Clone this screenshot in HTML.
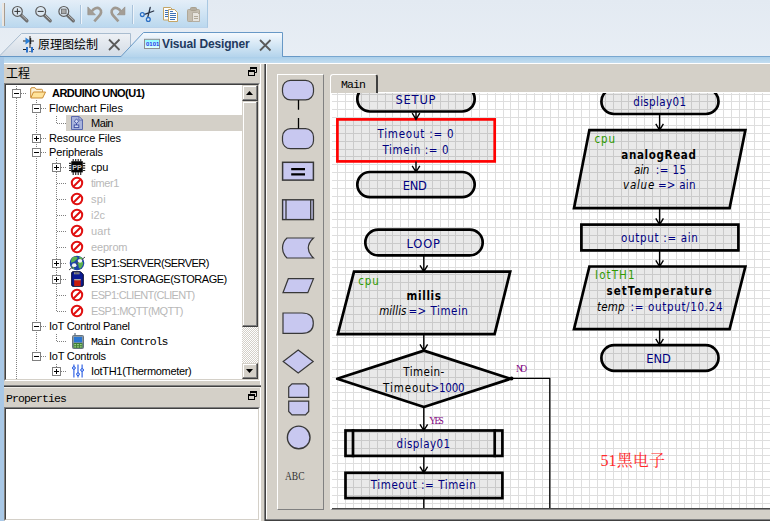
<!DOCTYPE html>
<html lang="zh"><head><meta charset="utf-8"><title>Visual Designer</title><style>
*{box-sizing:border-box;margin:0;padding:0}
html,body{width:770px;height:521px;overflow:hidden;background:#d4d0c8}
body{position:relative;font-family:"Liberation Sans","Noto Sans CJK SC",sans-serif;font-size:12px;color:#000}
.abs{position:absolute}
#topbar{left:0;top:0;width:770px;height:57px;background:linear-gradient(#e3eaf2,#e8eef5)}
#toolbar{left:0;top:0;width:208px;height:28px;background:linear-gradient(#e4eef8,#d2e5f4 45%,#bbd8ee);border-right:1px solid #a9c8e2;border-bottom:1px solid #b9d2ea}
#band{left:0;top:57px;width:770px;height:6px;background:linear-gradient(#abcfea,#c3ddf0)}
#tabline{left:0;top:56px;width:770px;height:1px;background:#78a7d0}
#leftstripe{left:0;top:57px;width:4px;height:464px;background:#a9c8e6}
.mono,.row.mono{font-family:"Liberation Mono","Noto Serif CJK SC",monospace;font-size:11.5px;letter-spacing:-.9px}
.song{font-family:"Liberation Serif","Noto Serif CJK SC",serif}
.sunken{border:1px solid;border-color:#808080 #fff #fff #808080}
.sunken>.in{position:absolute;left:0;top:0;right:0;bottom:0;border:1px solid;border-color:#404040 #d4d0c8 #d4d0c8 #404040;background:#fff}
.row{position:absolute;left:0;height:16px;line-height:16px;white-space:nowrap;font-size:11px}
.dis{color:#b8b8b8}
.btn{position:absolute;background:#d4d0c8;border:1px solid;border-color:#d4d0c8 #404040 #404040 #d4d0c8;box-shadow:inset -1px -1px 0 #808080,inset 1px 1px 0 #fff}
.pm{position:absolute;width:9px;height:9px;border:1px solid #808080;background:#fff}
.pm:before{content:"";position:absolute;left:1px;top:3px;width:5px;height:1px;background:#000}
.pm.plus:after{content:"";position:absolute;left:3px;top:1px;width:1px;height:5px;background:#000}
.vdot{position:absolute;width:1px;background-image:linear-gradient(#808080 50%,transparent 50%);background-size:1px 2px}
.hdot{position:absolute;height:1px;background-image:linear-gradient(90deg,#808080 50%,transparent 50%);background-size:2px 1px}
</style></head><body>
<div id="topbar" class="abs"></div>
<div id="toolbar" class="abs"></div>
<div id="tabline" class="abs"></div>
<div id="band" class="abs"></div>
<div id="leftstripe" class="abs"></div>
<svg class="abs" style="left:0;top:0" width="210" height="28" viewBox="0 0 210 28"><rect x="2" y="3" width="2" height="23" fill="#ece7e1"/><rect x="4" y="3" width="1" height="23" fill="#a89c90"/><g><path d="M21.099999999999998 15.2l5.8 5.6" stroke="#6e6e6e" stroke-width="3.3" stroke-linecap="round"/><path d="M21.599999999999998 15l5.3 5.1" stroke="#b8b8b8" stroke-width="1" stroke-linecap="round"/><circle cx="17.4" cy="11.4" r="4.9" fill="#dbe7f1" stroke="#5c5c5c" stroke-width="1.2"/><path d="M14.4 11.4h6M17.4 8.4v6" stroke="#333" stroke-width="1"/></g><g><path d="M44.400000000000006 15.2l5.8 5.6" stroke="#6e6e6e" stroke-width="3.3" stroke-linecap="round"/><path d="M44.900000000000006 15l5.3 5.1" stroke="#b8b8b8" stroke-width="1" stroke-linecap="round"/><circle cx="40.7" cy="11.4" r="4.9" fill="#dbe7f1" stroke="#5c5c5c" stroke-width="1.2"/><path d="M37.7 11.4h6" stroke="#333" stroke-width="1"/></g><g><path d="M67.5 15.2l5.8 5.6" stroke="#6e6e6e" stroke-width="3.3" stroke-linecap="round"/><path d="M68.0 15l5.3 5.1" stroke="#b8b8b8" stroke-width="1" stroke-linecap="round"/><circle cx="63.8" cy="11.4" r="4.9" fill="#dbe7f1" stroke="#5c5c5c" stroke-width="1.2"/><rect x="61.5" y="9.1" width="4.6" height="4.6" fill="#a8a8a8" stroke="#666" stroke-width=".8"/></g><rect x="80" y="5" width="1" height="19" fill="#a9c2da"/><rect x="81" y="5" width="1" height="19" fill="#eef4fa"/><g id="undo"><path d="M87.8 6.9V14.8H95.4Z" fill="#a39d95" stroke="#8e8880" stroke-width=".6" stroke-linejoin="round"/><path d="M91.8 11.3C93.5 8.3 97.3 6.9 99.6 8.7C102.3 10.9 101 14 99 16.2L94.3 21.3" fill="none" stroke="#9f9991" stroke-width="2.7"/></g><use href="#undo" transform="translate(212.7,0) scale(-1,1)"/><rect x="132" y="5" width="1" height="19" fill="#a9c2da"/><rect x="133" y="5" width="1" height="19" fill="#eef4fa"/><g fill="none"><path d="M150.2 7.5L147.8 17.2M153.7 11L144.5 14.3" stroke="#2b3548" stroke-width="1.3" stroke-linecap="round"/><circle cx="142.3" cy="14.6" r="1.9" stroke="#2a6fc4" stroke-width="1.3" fill="#dfeaf6"/><circle cx="148.3" cy="19.4" r="1.9" stroke="#2a6fc4" stroke-width="1.3" fill="#dfeaf6"/></g><g><path d="M163.5 7.5h7l2.5 2.5v10h-9.5z" fill="#fdfdfd" stroke="#c4a566"/><path d="M168.5 9.5h6l3 3v9h-9z" fill="#fff" stroke="#c4a566"/><path d="M165 10.5h3M165 12.5h3M165 14.5h3M165 16.5h3M170 13.5h6M170 15.5h6M170 17.5h6M170 19.5h5M170 11.5h3" stroke="#3f72b8" stroke-width="1"/></g><g><rect x="187.5" y="9.5" width="12" height="12" rx="1" fill="#c4bdb0" stroke="#b0a898"/><rect x="190.5" y="7.5" width="6" height="3" rx="1" fill="#b4ad9f" stroke="#a8a090"/><path d="M192.5 12.5h5l2 2v7h-7z" fill="#e6e3dd" stroke="#b4ada0"/><path d="M194 16.5h4M194 18.5h4" stroke="#b0a898"/></g></svg>
<svg class="abs" style="left:0;top:28px" width="300" height="30" viewBox="0 28 300 30">
<defs><linearGradient id="t1" x1="0" y1="0" x2="0" y2="1"><stop offset="0" stop-color="#eef1f5"/><stop offset="1" stop-color="#d3dce6"/></linearGradient>
<linearGradient id="cy" x1="0" y1="0" x2="0" y2="1"><stop offset="0" stop-color="#86fbff"/><stop offset="1" stop-color="#e6ffff"/></linearGradient><linearGradient id="t2" x1="0" y1="0" x2="0" y2="1"><stop offset="0" stop-color="#f6fafe"/><stop offset="1" stop-color="#b4d4ec"/></linearGradient></defs>
<path d="M-1 56.5L21.5 33.5H130.5V56.5Z" fill="url(#t1)" stroke="#a9bccf"/>
<path d="M121 57L143.5 32.5H282.5V57Z" fill="url(#t2)"/>
<path d="M0 56.5H121L143.5 32.5H282.5V56.5H300" fill="none" stroke="#6798c6"/>
<g stroke="#5a5a5a" stroke-width="1.8"><path d="M109 39.5l10.5 10.5M119.5 39.5l-10.5 10.5M260 40l10.5 10.5M270.5 40l-10.5 10.5"/></g>
<g><path d="M30 36v16M23 41h11M23 49.5h11" stroke="#222" stroke-width="1" fill="none"/><path d="M25.5 37.5v7l5-3.5z" fill="#2a80d8"/><path d="M30.5 38v6" stroke="#222" stroke-width="1.4"/><rect x="26" y="47" width="2" height="5.5" fill="#2a70c8"/><rect x="31" y="47" width="2" height="5.5" fill="#2a70c8"/><rect x="28" y="48" width="3" height="3" fill="#e4e8ee"/></g>
<rect x="144.5" y="39.3" width="15" height="9.2" fill="url(#cy)" stroke="#8f8f8f"/>
</svg>
<div class="abs" style="left:38px;top:36px;font-size:12px;line-height:18px;white-space:nowrap">原理图绘制</div>
<div class="abs" style="left:162px;top:36px;font-size:12px;line-height:16px;white-space:nowrap;font-weight:bold;letter-spacing:-.15px;color:#1f3a5f">Visual Designer</div>
<div class="abs" style="left:146px;top:41px;font-size:6px;line-height:7px;color:#2838e8;font-weight:bold;white-space:nowrap;letter-spacing:0">0101</div>
<div class="abs" style="left:4px;top:63px;width:257px;height:458px;background:#d4d0c8;border-right:1px solid #fff"></div>
<div class="abs" style="left:6px;top:65px;font-size:12px;line-height:18px">工程</div>
<svg class="abs" style="left:248px;top:67px" width="9" height="9" viewBox="0 0 9 9"><path d="M2.5 2.5V0.5H8.5V5.5H6.5" fill="none" stroke="#000"/><rect x="2" y="0" width="7" height="2" fill="#000"/><rect x="0.5" y="3.5" width="6" height="5" fill="none" stroke="#000"/><rect x="0" y="3" width="7" height="2" fill="#000"/></svg>
<div class="abs sunken" style="left:4px;top:83px;width:256px;height:298px"><div class="in"></div></div>
<div class="abs" style="left:242px;top:85px;width:16px;height:294px;background:#eae8e3;background-image:conic-gradient(#fff 25%,#d4d0c8 0 50%,#fff 0 75%,#d4d0c8 0);background-size:2px 2px"></div>
<div class="btn" style="left:242px;top:85px;width:16px;height:16px"></div>
<div class="btn" style="left:242px;top:363px;width:16px;height:16px"></div>
<div class="btn" style="left:242px;top:101px;width:16px;height:226px"></div>
<svg class="abs" style="left:242px;top:85px" width="16" height="294"><path d="M4 10h7l-3.5-4z" fill="#000"/><path d="M4 284h7l-3.5 4z" fill="#000"/></svg>
<div class="abs" style="left:0;top:0;width:242px;height:379px;overflow:hidden"><div class="vdot" style="left:16px;top:86px;height:3px"></div><div class="vdot" style="left:16px;top:98px;height:282px"></div><div class="vdot" style="left:36px;top:100px;height:253px"></div><div class="vdot" style="left:56px;top:116px;height:8px"></div><div class="vdot" style="left:56px;top:158px;height:154px"></div><div class="vdot" style="left:56px;top:334px;height:8px"></div><div class="vdot" style="left:56px;top:364px;height:4px"></div><div class="hdot" style="left:21px;top:93px;width:6px"></div><div class="pm" style="left:12px;top:89px"></div><div class="abs" style="left:30px;top:87px;width:16px;height:12px;line-height:0"><svg width="16" height="12" viewBox="0 0 16 12"><path d="M.700 10.5V2q0-1.3 1.3-1.3h3l1.3 1.6h5.2q1 0 1 1v1.5" fill="#fdf2d6" stroke="#c98a32" stroke-width="1"/><path d="M.800 11L3.5 5h12L12.6 11z" fill="#ffe39a" stroke="#c98a32" stroke-width="1" stroke-linejoin="round"/></svg></div><div class="row" style="left:52px;top:85px;font-weight:bold;letter-spacing:-0.52px;">ARDUINO UNO(U1)</div><div class="hdot" style="left:41px;top:108px;width:6px"></div><div class="pm" style="left:32px;top:104px"></div><div class="row" style="left:49px;top:100px;letter-spacing:0.00px;">Flowchart Files</div><div class="hdot" style="left:57px;top:123px;width:10px"></div><div class="abs" style="left:66px;top:115px;width:176px;height:16px;background:#d4d0c8"></div><div class="abs" style="left:71px;top:116px;width:12px;height:14px;line-height:0"><svg width="12" height="14" viewBox="0 0 12 14"><path d="M.500 .500h7.5l3.5 3.5v9.5h-11z" fill="#a9b4dc" stroke="#5a69ac"/><path d="M8 .500v3.5h3.5z" fill="#e6ebfa" stroke="#5a69ac" stroke-linejoin="round"/><path d="M5.5 3l2.2 2.2-2.2 2.2-2.2-2.2z" fill="#d4dcf4" stroke="#3a4aa0" stroke-width=".9"/><path d="M5.5 7.4v1.6" stroke="#3a4aa0"/><rect x="3.2" y="9" width="4.6" height="2.6" fill="#d4dcf4" stroke="#3a4aa0" stroke-width=".9"/></svg></div><div class="row" style="left:91px;top:115px;letter-spacing:-0.45px;">Main</div><div class="hdot" style="left:41px;top:138px;width:6px"></div><div class="pm plus" style="left:32px;top:134px"></div><div class="row" style="left:49px;top:130px;letter-spacing:-0.1px;">Resource Files</div><div class="hdot" style="left:41px;top:152px;width:6px"></div><div class="pm" style="left:32px;top:148px"></div><div class="row" style="left:49px;top:144px;letter-spacing:-0.16px;">Peripherals</div><div class="hdot" style="left:61px;top:167px;width:6px"></div><div class="pm plus" style="left:52px;top:163px"></div><div class="abs" style="left:69px;top:159px;width:17px;height:16px;line-height:0"><svg width="17" height="16" viewBox="0 0 17 16"><rect x="2.3" y="2.2" width="11.5" height="11.2" fill="#050505"/><path d="M4.2 0v2.5M6.7 0v2.5M9.2 0v2.5M11.7 0v2.5M4.2 13v2.9M6.7 13v2.9M9.2 13v2.9M11.7 13v2.9M0 4.3h2.5M0 6.7h2.5M0 9.1h2.5M0 11.5h2.5M13.5 4.3h2.7M13.5 6.7h2.7M13.5 9.1h2.7M13.5 11.5h2.7" stroke="#2a2a2a" stroke-width="1.2"/><text x="8.05" y="10.6" font-size="7.5" font-weight="bold" fill="#cfcfcf" text-anchor="middle" font-family="Liberation Sans,sans-serif" textLength="9.5" lengthAdjust="spacingAndGlyphs">PP</text></svg></div><div class="row" style="left:91px;top:159px;letter-spacing:-0.18px;">cpu</div><div class="hdot" style="left:57px;top:183px;width:10px"></div><div class="abs" style="left:70px;top:176px;width:14px;height:14px;line-height:0"><svg width="14" height="14" viewBox="0 0 14 14"><circle cx="7" cy="7" r="5.2" fill="#fff" stroke="#e01010" stroke-width="2"/><path d="M3.5 10.5l7-7" stroke="#e01010" stroke-width="2"/></svg></div><div class="row dis" style="left:91px;top:175px;letter-spacing:-0.45px;">timer1</div><div class="hdot" style="left:57px;top:199px;width:10px"></div><div class="abs" style="left:70px;top:192px;width:14px;height:14px;line-height:0"><svg width="14" height="14" viewBox="0 0 14 14"><circle cx="7" cy="7" r="5.2" fill="#fff" stroke="#e01010" stroke-width="2"/><path d="M3.5 10.5l7-7" stroke="#e01010" stroke-width="2"/></svg></div><div class="row dis" style="left:91px;top:191px;letter-spacing:0.27px;">spi</div><div class="hdot" style="left:57px;top:215px;width:10px"></div><div class="abs" style="left:70px;top:208px;width:14px;height:14px;line-height:0"><svg width="14" height="14" viewBox="0 0 14 14"><circle cx="7" cy="7" r="5.2" fill="#fff" stroke="#e01010" stroke-width="2"/><path d="M3.5 10.5l7-7" stroke="#e01010" stroke-width="2"/></svg></div><div class="row dis" style="left:91px;top:207px;letter-spacing:-0.03px;">i2c</div><div class="hdot" style="left:57px;top:231px;width:10px"></div><div class="abs" style="left:70px;top:224px;width:14px;height:14px;line-height:0"><svg width="14" height="14" viewBox="0 0 14 14"><circle cx="7" cy="7" r="5.2" fill="#fff" stroke="#e01010" stroke-width="2"/><path d="M3.5 10.5l7-7" stroke="#e01010" stroke-width="2"/></svg></div><div class="row dis" style="left:91px;top:223px;letter-spacing:0.11px;">uart</div><div class="hdot" style="left:57px;top:247px;width:10px"></div><div class="abs" style="left:70px;top:240px;width:14px;height:14px;line-height:0"><svg width="14" height="14" viewBox="0 0 14 14"><circle cx="7" cy="7" r="5.2" fill="#fff" stroke="#e01010" stroke-width="2"/><path d="M3.5 10.5l7-7" stroke="#e01010" stroke-width="2"/></svg></div><div class="row dis" style="left:91px;top:239px;letter-spacing:-0.16px;">eeprom</div><div class="hdot" style="left:61px;top:263px;width:6px"></div><div class="pm plus" style="left:52px;top:259px"></div><div class="abs" style="left:68px;top:255px;width:18px;height:16px;line-height:0"><svg width="18" height="16" viewBox="0 0 18 16"><circle cx="9" cy="8" r="7.3" fill="#1d43a4"/><path d="M4.5 2.5c2-1.5 4-1.2 5 0 .5 1.5-1.5 2-2.5 3.5s-2.5.5-3.5 2c-.8-1.5-.5-4 1-5.5zM9.5 7.5c1.5-1 3.5-1.5 5.5-.5.5 2-.5 4.5-2.5 6.5-1.5.5-2-1.5-2-3s-1.5-2-1-3zM11 1.5c1.5 0 3 1 4 2.5l-2 1c-1-.5-2-2-2-3.5zM3.5 11c1 0 2.5 1 3 2.5l-1 .5c-1-.5-2-2-2-3z" fill="#5cb24e"/><path d="M1 15l16-13" stroke="#444" stroke-width="1"/><ellipse cx="12" cy="5.8" rx="2.3" ry="1.9" fill="#f4f4f4"/><ellipse cx="6.2" cy="10.2" rx="2.3" ry="1.9" fill="#f4f4f4"/></svg></div><div class="row" style="left:91px;top:255px;letter-spacing:-0.57px;">ESP1:SERVER(SERVER)</div><div class="hdot" style="left:61px;top:279px;width:6px"></div><div class="pm plus" style="left:52px;top:275px"></div><div class="abs" style="left:71px;top:271px;width:13px;height:16px;line-height:0"><svg width="13" height="16" viewBox="0 0 13 16"><path d="M2 .700h7.5l2.8 2.8v10.5q0 1.3-1.3 1.3h-9q-1.3 0-1.3-1.3v-12q0-1.3 1.3-1.3z" fill="#0b1b92" stroke="#05082a" stroke-width="1"/><rect x="3" y="1.3" width="5.5" height="2" fill="#9a9a9a"/><path d="M4.3 1.3v2M5.7 1.3v2M7.1 1.3v2" stroke="#333" stroke-width=".5"/><rect x="3.2" y="8" width="6.5" height="7" fill="#c81b0b"/><rect x="3.2" y="8" width="6.5" height="1.3" fill="#a8a8a8"/></svg></div><div class="row" style="left:91px;top:271px;letter-spacing:-0.47px;">ESP1:STORAGE(STORAGE)</div><div class="hdot" style="left:57px;top:295px;width:10px"></div><div class="abs" style="left:70px;top:288px;width:14px;height:14px;line-height:0"><svg width="14" height="14" viewBox="0 0 14 14"><circle cx="7" cy="7" r="5.2" fill="#fff" stroke="#e01010" stroke-width="2"/><path d="M3.5 10.5l7-7" stroke="#e01010" stroke-width="2"/></svg></div><div class="row dis" style="left:91px;top:287px;letter-spacing:-0.7px;">ESP1:CLIENT(CLIENT)</div><div class="hdot" style="left:57px;top:311px;width:10px"></div><div class="abs" style="left:70px;top:304px;width:14px;height:14px;line-height:0"><svg width="14" height="14" viewBox="0 0 14 14"><circle cx="7" cy="7" r="5.2" fill="#fff" stroke="#e01010" stroke-width="2"/><path d="M3.5 10.5l7-7" stroke="#e01010" stroke-width="2"/></svg></div><div class="row dis" style="left:91px;top:303px;letter-spacing:-0.6px;">ESP1:MQTT(MQTT)</div><div class="hdot" style="left:41px;top:326px;width:6px"></div><div class="pm" style="left:32px;top:322px"></div><div class="row" style="left:49px;top:318px;letter-spacing:-0.28px;">IoT Control Panel</div><div class="hdot" style="left:57px;top:341px;width:10px"></div><div class="abs" style="left:72px;top:333px;width:12px;height:16px;line-height:0"><svg width="12" height="16" viewBox="0 0 12 16"><rect x="2.2" y="0" width="1.6" height="3" fill="#8a96a2"/><rect x=".500" y="2.5" width="11" height="13" rx="1" fill="#8797a6" stroke="#66747f"/><rect x="2" y="4" width="8" height="5.3" fill="#2a76d2"/><rect x="1.5" y="10" width="9" height="5" fill="#3f7f35"/><path d="M2.3 11.6h1.8M5.1 11.6h1.8M7.9 11.6h1.8M2.3 13.8h1.8M5.1 13.8h1.8M7.9 13.8h1.8" stroke="#9ccf84" stroke-width="1.2"/></svg></div><div class="row mono" style="left:91px;top:334px;letter-spacing:-1.02px;">Main Controls</div><div class="hdot" style="left:41px;top:356px;width:6px"></div><div class="pm" style="left:32px;top:352px"></div><div class="row" style="left:49px;top:348px;letter-spacing:-0.25px;">IoT Controls</div><div class="hdot" style="left:61px;top:371px;width:6px"></div><div class="pm plus" style="left:52px;top:367px"></div><div class="abs" style="left:72px;top:364px;width:12px;height:14px;line-height:0"><svg width="12" height="14" viewBox="0 0 12 14"><path d="M1.9 .500v13M6 .500v13M10.1 .500v13" stroke="#2458e0" stroke-width="1.1"/><g fill="#cfe0ff" stroke="#2458e0" stroke-width="1"><circle cx="1.9" cy="4" r="1.4"/><circle cx="6" cy="10.2" r="1.4"/><circle cx="10.1" cy="6" r="1.4"/></g></svg></div><div class="row" style="left:91px;top:363px;letter-spacing:-0.31px;">IotTH1(Thermometer)</div></div>
<div class="abs" style="left:4px;top:385px;width:257px;height:1px;background:#808080"></div>
<div class="abs" style="left:4px;top:386px;width:257px;height:1px;background:#404040"></div>
<div class="abs" style="left:4px;top:387px;width:257px;height:1px;background:#f0eee9"></div>
<div class="abs mono" style="left:6px;top:391px;line-height:16px">Properties</div>
<svg class="abs" style="left:248px;top:391px" width="9" height="9" viewBox="0 0 9 9"><path d="M2.5 2.5V0.5H8.5V5.5H6.5" fill="none" stroke="#000"/><rect x="2" y="0" width="7" height="2" fill="#000"/><rect x="0.5" y="3.5" width="6" height="5" fill="none" stroke="#000"/><rect x="0" y="3" width="7" height="2" fill="#000"/></svg>
<div class="abs sunken" style="left:4px;top:407px;width:256px;height:114px"><div class="in"></div></div>
<div class="abs" style="left:264px;top:63px;width:1px;height:458px;background:#7a7a7a"></div>
<div class="abs" style="left:265px;top:63px;width:1px;height:458px;background:#404040"></div>
<div class="abs" style="left:266px;top:63px;width:1px;height:458px;background:#fff"></div>
<div class="abs" style="left:4px;top:63px;width:766px;height:1px;background:#fff"></div>
<div class="abs" style="left:277px;top:74px;width:47px;height:436px;border:1px solid;border-color:#fff #808080 #808080 #fff"></div>
<svg class="abs" style="left:277px;top:74px" width="48" height="436" viewBox="277 74 48 436">
<g fill="#c8c8f0" stroke="#383838" stroke-width="1.2">
<rect x="282.5" y="80.3" width="31" height="19.5" rx="8"/>
<rect x="282.5" y="128.7" width="31" height="20" rx="8"/>
<rect x="282.6" y="162.3" width="30.8" height="17.8" stroke-width="1.5"/>
<rect x="282.6" y="199.8" width="30.8" height="19.8" stroke-width="1.4"/>
<path d="M287 238H313.5Q303 248 313.5 258H287Q282.5 254 282.5 248T287 238Z"/>
<path d="M288.3 278.7H313.5L307.8 292.7H283Z"/>
<path d="M283 313H302Q313.3 313 313.3 323.15Q313.3 333.3 302 333.3H283Z"/>
<path d="M298.2 350L313.2 361.5L298.2 373L283.2 361.5Z"/>
<path d="M292 383.8H305.5L308.7 387V397.3H288.7V387Z"/>
<path d="M288.7 401.2H308.7V411.5L305.5 414.8H292L288.7 411.5Z"/>
<circle cx="298.7" cy="437.4" r="11.3" stroke-width="1.4"/>
</g>
<path d="M298.5 100V109.7M298.5 118V128.5" stroke="#000" stroke-width="1.3"/>
<path d="M291.2 169.2H305M291.2 174.4H305" stroke="#000" stroke-width="2.3"/>
<path d="M286 199.8V219.6M310.7 199.8V219.6" stroke="#383838" stroke-width="1.3"/>
<text x="285" y="479.5" font-family="Liberation Serif,serif" font-size="12" fill="#333" textLength="19.5" lengthAdjust="spacingAndGlyphs">ABC</text>
</svg>
<div class="abs" style="left:330px;top:92px;width:445px;height:418px;border:solid;border-width:1px 0 1px 2px;border-color:#fff #8a8a8a #8a8a8a #fff"></div>
<div class="abs" style="left:330px;top:74px;width:48px;height:19px;background:#d4d0c8;border:solid;border-width:1px 2px 0 1px;border-color:#fff #404040 transparent #fff;border-radius:3px 3px 0 0"></div>
<div class="abs mono" style="left:341px;top:77px;line-height:16px">Main</div>
<div class="abs" style="left:332px;top:508px;width:438px;height:1px;background:#484848"></div>
<svg class="abs" style="left:332px;top:93px" width="438" height="415" viewBox="332 93 438 415"><defs><g id="shapes"><rect x="357.3" y="86.3" width="117.4" height="25.2" rx="12.6"/><rect x="357.3" y="172" width="117.4" height="25.2" rx="12.6"/><rect x="365.3" y="229.6" width="117.4" height="25.8" rx="12.9"/><path d="M354 271.6L510.2 271.6L494.6 334.2L337.8 334.2Z"/><rect x="345.5" y="430.5" width="156.9" height="25.4"/><rect x="345.5" y="472.8" width="156.9" height="25.3"/><rect x="601.4" y="88.8" width="117.1" height="25.2" rx="12.6"/><path d="M589.4 130.1L745.4 130.1L729.6 208.2L574 208.2Z"/><rect x="581.4" y="224.6" width="157.0" height="25.8"/><path d="M589.4 266.5L745.4 266.5L729.6 329.1L574 329.1Z"/><rect x="601.4" y="345.1" width="117.1" height="25.7" rx="12.8"/></g><g id="dia"><path d="M337.2 378.8L423.9 350.6L510.6 378.8L423.9 407Z"/></g><g id="red"><rect x="337.4" y="119.4" width="157.3" height="42.0"/></g></defs><rect x="332" y="93" width="438" height="415" fill="#fff"/><g fill="#e9e9e9" stroke="none"><use href="#shapes"/><use href="#dia"/><use href="#red"/></g><path d="M337.5 93V508M345.5 93V508M353.5 93V508M361.5 93V508M369.5 93V508M377.5 93V508M385.5 93V508M392.5 93V508M400.5 93V508M408.5 93V508M416.5 93V508M424.5 93V508M432.5 93V508M440.5 93V508M448.5 93V508M455.5 93V508M463.5 93V508M471.5 93V508M479.5 93V508M487.5 93V508M495.5 93V508M503.5 93V508M510.5 93V508M518.5 93V508M526.5 93V508M534.5 93V508M542.5 93V508M550.5 93V508M558.5 93V508M566.5 93V508M573.5 93V508M581.5 93V508M589.5 93V508M597.5 93V508M605.5 93V508M613.5 93V508M621.5 93V508M628.5 93V508M636.5 93V508M644.5 93V508M652.5 93V508M660.5 93V508M668.5 93V508M676.5 93V508M684.5 93V508M691.5 93V508M699.5 93V508M707.5 93V508M715.5 93V508M723.5 93V508M731.5 93V508M739.5 93V508M746.5 93V508M754.5 93V508M762.5 93V508M332 94.5H770M332 101.5H770M332 109.5H770M332 117.5H770M332 125.5H770M332 133.5H770M332 141.5H770M332 149.5H770M332 156.5H770M332 164.5H770M332 172.5H770M332 180.5H770M332 188.5H770M332 196.5H770M332 204.5H770M332 212.5H770M332 219.5H770M332 227.5H770M332 235.5H770M332 243.5H770M332 251.5H770M332 259.5H770M332 267.5H770M332 274.5H770M332 282.5H770M332 290.5H770M332 298.5H770M332 306.5H770M332 314.5H770M332 322.5H770M332 330.5H770M332 337.5H770M332 345.5H770M332 353.5H770M332 361.5H770M332 369.5H770M332 377.5H770M332 385.5H770M332 392.5H770M332 400.5H770M332 408.5H770M332 416.5H770M332 424.5H770M332 432.5H770M332 440.5H770M332 448.5H770M332 455.5H770M332 463.5H770M332 471.5H770M332 479.5H770M332 487.5H770M332 495.5H770M332 503.5H770" stroke="#000" stroke-opacity=".13" stroke-width="1" fill="none" shape-rendering="crispEdges"/><g fill="none" stroke="#000" stroke-width="2.7"><use href="#shapes"/><use href="#dia" stroke-linejoin="round"/><path d="M353 430.5V455.9M494.7 430.5V455.9" stroke-linecap="square"/></g><use href="#red" fill="none" stroke="#f00" stroke-width="2.7"/><path d="M416 111.5V119.4M412.2 113.2L416 119.4L419.8 113.2M416 161.4V172M412.2 165.8L416 172L419.8 165.8M423.8 255.4V271.6M420.0 265.4L423.8 271.6L427.6 265.4M423.8 334.2V350.6M420.0 344.4L423.8 350.6L427.6 344.4M423.8 407V430.5M420.0 424.3L423.8 430.5L427.6 424.3M423.8 455.9V472.8M420.0 466.6L423.8 472.8L427.6 466.6M423.8 498.1V509M659.6 114V130.1M655.8000000000001 123.9L659.6 130.1L663.4 123.9M659.6 208.2V224.6M655.8000000000001 218.4L659.6 224.6L663.4 218.4M659.6 250.4V266.5M655.8000000000001 260.3L659.6 266.5L663.4 260.3M659.6 328.7V345.1M655.8000000000001 338.9L659.6 345.1L663.4 338.9" fill="none" stroke="#000" stroke-width="1.4"/><path d="M511 378.4H549.8V509" fill="none" stroke="#000" stroke-width="1.3"/><circle cx="511.5" cy="378.6" r="2" fill="#000"/><g font-family="DejaVu Sans Condensed,DejaVu Sans,Liberation Sans,sans-serif" font-size="11.5"><text x="395.5" y="104" textLength="40.0" fill="#000080" font-family="DejaVu Sans,Liberation Sans,sans-serif">SETUP</text><text x="377.4" y="137.7" textLength="76.2" fill="#000080" >Timeout := 0</text><text x="382.4" y="153.6" textLength="66.2" fill="#000080" >Timein := 0</text><text x="402.7" y="189.6" textLength="24.1" fill="#000080" font-family="DejaVu Sans,Liberation Sans,sans-serif">END</text><text x="406.5" y="247.7" textLength="33.5" fill="#000080" font-family="DejaVu Sans,Liberation Sans,sans-serif">LOOP</text><text x="358.2" y="285" textLength="20.6" fill="#2f9a00" >cpu</text><text x="406.5" y="299.8" textLength="34.5" fill="#000" font-weight="bold">millis</text><text x="379.2" y="315.4" textLength="27.3" fill="#000" font-style="italic">millis</text><text x="408.4" y="315.4" textLength="59.5" fill="#000080" >=&gt; Timein</text><text x="403.3" y="375.7" textLength="40.9" fill="#000" >Timein-</text><text x="383.1" y="391.8" textLength="47.5" fill="#000" >Timeout</text><text x="430.6" y="391.8" textLength="34.0" fill="#000080" >&gt;1000</text><text x="396.6" y="447.6" textLength="53.6" fill="#000080" >display01</text><text x="370.7" y="489.3" textLength="105.1" fill="#000080" >Timeout := Timein</text><text x="633.2" y="105.7" textLength="52.8" fill="#000080" >display01</text><text x="594.5" y="142.7" textLength="20.5" fill="#2f9a00" >cpu</text><text x="621.3" y="158.6" textLength="74.6" fill="#000" font-weight="bold">analogRead</text><text x="634" y="174.3" textLength="15.4" fill="#000" font-style="italic">ain</text><text x="655.8" y="174.3" textLength="30.2" fill="#000080" >:= 15</text><text x="623" y="189.2" textLength="31.3" fill="#000" font-style="italic">value</text><text x="657.9" y="189.2" textLength="37.6" fill="#000080" >=&gt; ain</text><text x="621" y="242.3" textLength="76.9" fill="#000080" >output := ain</text><text x="595.1" y="278.8" textLength="39.4" fill="#2f9a00" >IotTH1</text><text x="606.6" y="294.7" textLength="105.1" fill="#000" font-weight="bold">setTemperature</text><text x="597.1" y="310.6" textLength="27.6" fill="#000" font-style="italic">temp</text><text x="630.5" y="310.6" textLength="92.1" fill="#000080" >:= output/10.24</text><text x="646.3" y="362.5" textLength="24.5" fill="#000080" font-family="DejaVu Sans,Liberation Sans,sans-serif">END</text></g><g font-family="Liberation Serif,serif" font-size="9.5" fill="#800080"><text x="516" y="371.5" textLength="11.2">NO</text><text x="429.2" y="424" textLength="14.7">YES</text></g><text x="600.5" y="466" font-family="Liberation Serif,Noto Serif CJK SC,serif" font-size="16" fill="#ff2a2a" textLength="64.5">51黑电子</text></svg>
<div class="abs" style="left:266px;top:519px;width:504px;height:1px;background:#808080"></div>
<div class="abs" style="left:265px;top:520px;width:505px;height:1px;background:#404040"></div>
</body></html>
